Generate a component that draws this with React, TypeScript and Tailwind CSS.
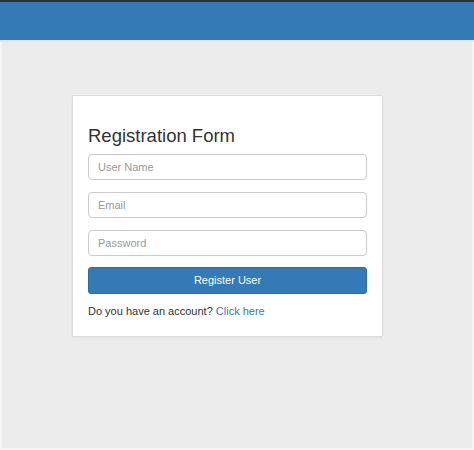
import React from 'react';

const App: React.FC = () => {
  return (
    <div
      className="h-[450px] w-[474px] overflow-hidden bg-[#ececec] flex flex-col"
      style={{ fontFamily: '"Liberation Sans", Arial, sans-serif' }}
    >
      {/* top navbar */}
      <div className="h-[2px] bg-[#2b3036]" />
      <div className="h-[38px] bg-[#337ab7]" />
      <div className="h-[2px] bg-[#e3e8ee]" />

      <div className="flex-1 border-l-2 border-r-2 border-b-2 border-[#f5f5f5] pl-[70px] pt-[53px]">
        <div className="w-[311px] bg-white border border-[#dddddd] shadow-[0_1px_2px_rgba(0,0,0,0.05)] px-[15px] pt-[28px] pb-[17px]">
          <h3 className="text-[18.5px] leading-[24px] text-[#333333] font-normal">Registration Form</h3>

          <div className="mt-[6px] flex flex-col gap-[12px]">
            <input
              type="text"
              placeholder="User Name"
              className="h-[26px] w-full rounded-[4px] border border-[#cccccc] px-[9px] text-[11px] text-[#555] placeholder:text-[#999999] outline-none"
            />
            <input
              type="email"
              placeholder="Email"
              className="h-[26px] w-full rounded-[4px] border border-[#cccccc] px-[9px] text-[11px] text-[#555] placeholder:text-[#999999] outline-none"
            />
            <input
              type="password"
              placeholder="Password"
              className="h-[26px] w-full rounded-[4px] border border-[#cccccc] px-[9px] text-[11px] text-[#555] placeholder:text-[#999999] outline-none"
            />
          </div>

          <button className="mt-[11px] h-[27px] w-full rounded-[3px] border border-[#2e6da4] bg-[#337ab7] text-[11px] text-white">
            Register User
          </button>

          <p className="mt-[9px] text-[11px] leading-[16px] text-[#333333]">
            Do you have an account? <a href="#" className="text-[#337ab7]">Click here</a>
          </p>
        </div>
      </div>
    </div>
  );
};

export default App;
